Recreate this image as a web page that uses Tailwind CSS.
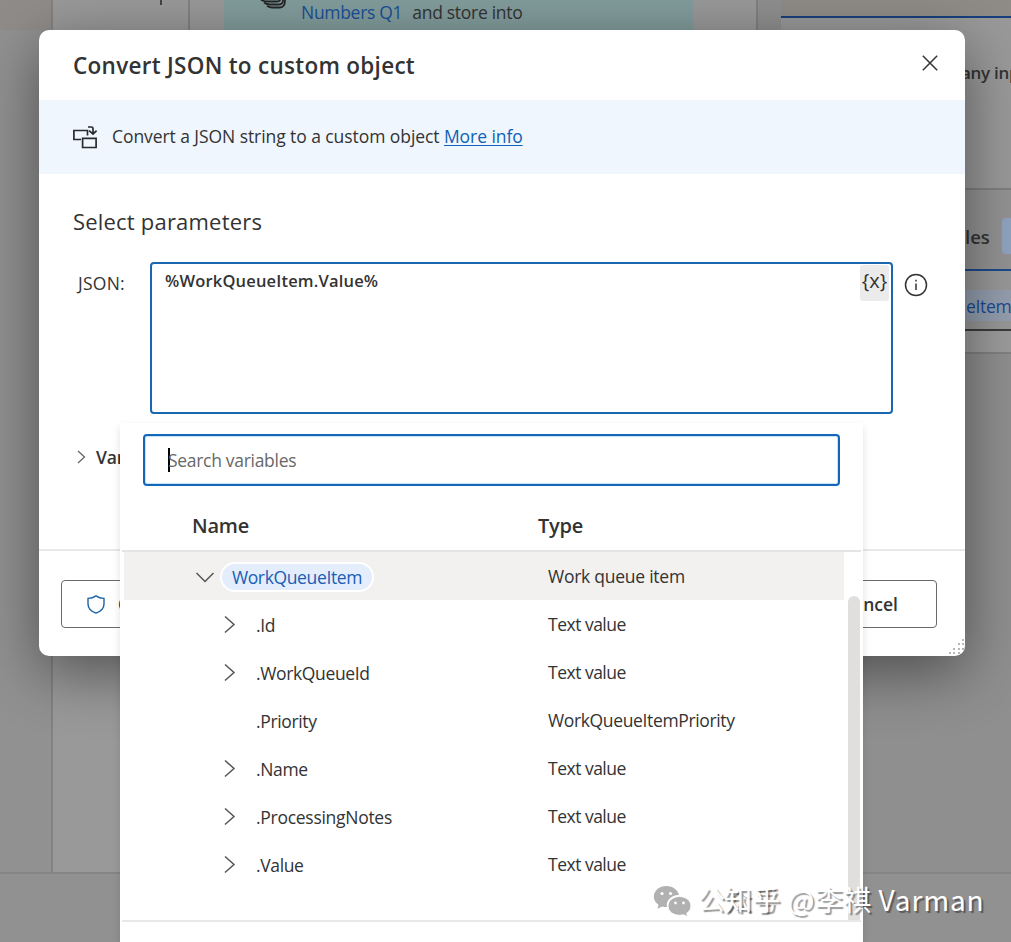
<!DOCTYPE html>
<html lang="en">
<head>
<meta charset="utf-8">
<title>Convert JSON to custom object</title>
<script src="https://cdn.jsdelivr.net/npm/@tailwindcss/browser@4"></script>
</head>
<body class="bg-[#909090]">
<div class="relative h-[942px] w-[1011px] overflow-hidden bg-[#919191] font-['Open_Sans','Noto_Sans_CJK_SC',sans-serif] text-[17.5px] leading-6 whitespace-nowrap text-[#333333]">

  <!-- Dimmed designer behind the dialog -->
  <div class="flex h-full flex-col">
    <div class="flex h-[872px] w-full shrink-0">
      <div class="w-[51px] shrink-0 bg-[#919191]"><div class="h-[30px] bg-[#8f8c89]"></div></div>
      <div class="flex w-[139px] shrink-0 justify-end border-x-2 border-x-[#828282] bg-[#999999] pr-[26px]"><div class="h-[5px] w-[2px] bg-[#444]"></div></div>
      <div class="w-[566px] shrink-0 bg-[#999999] pl-[34px]">
        <div class="flex h-[30px] w-[469px] items-start bg-[#829c9c] pl-[36px]">
          <svg class="h-[10px] w-[26px] shrink-0" viewBox="0 0 26 10" fill="none" stroke="#262626" stroke-width="1.800"><path d="M1 0C3 1 5 1.500 8 1.500h8c3 0 4-1 4-1.500M4 2.500c2 1.500 4 2 6 2h9c3 0 4-2 4-4.500M7 6c2 1 3 1.500 5 1.500h8c4 0 5-3 5-7.500" /></svg>
          <span class="ml-[15px] tracking-[-0.3px] text-[#1a4f97]">Numbers Q1</span><span class="ml-[10px] tracking-[-0.3px]">and store into</span>
        </div>
      </div>
      <div class="flex min-w-0 flex-1 flex-col border-l-2 border-[#808080] bg-[#8f8f8f]">
        <div class="ml-[23px] h-[18px] shrink-0 border-b-2 border-[#173f7c] bg-[#8f8c88]"></div>
        <div class="ml-[23px] h-[172px] shrink-0 border-b-2 border-[#7f7f7f] bg-[#999999] pt-[43px]">
          <div class="ml-[180px] text-[17px] font-semibold tracking-[-0.3px]">any input</div>
        </div>
        <div class="ml-[23px] flex h-[81px] shrink-0 border-b-2 border-[#1c4a8b] bg-[#939393]">
          <div class="mt-[35px] ml-[184px] w-[37px] shrink-0 text-[18.5px] font-semibold">les</div>
          <div class="mt-[28px] h-[36px] w-10 shrink-0 rounded-l bg-[#8fa3c0]"></div>
        </div>
        <div class="ml-[23px] h-[60px] shrink-0 border-b-2 border-[#3b3b3b] bg-[#989898] pt-[19px]"><div class="h-[31px] bg-[#949eae] pt-[4px] pl-[185px] tracking-[-0.3px] text-[#1a4b94]">eItem</div></div>
        <div class="ml-[23px] h-[23px] shrink-0 border-b-2 border-[#808080] bg-[#9c9c9c]"></div>
      </div>
    </div>
    <div class="flex-1 border-t-2 border-[#858585] bg-[#919191]"></div>
  </div>

  <!-- Dialog -->
  <div class="absolute top-[30px] left-[39px] flex h-[626px] w-[926px] flex-col rounded-[10px] bg-white shadow-[0_16px_60px_rgba(0,0,0,0.46)]">
    <div class="flex h-[70px] shrink-0 justify-between pt-[20px] pr-[27px] pl-[34px]">
      <h1 class="text-[22.500px] leading-8 font-semibold tracking-[0.28px]">Convert JSON to custom object</h1>
      <svg class="mt-[5px] size-4" viewBox="0 0 16 16" fill="none" stroke="#333" stroke-width="1.500"><path d="M.8.8l14.400 14.400M15.200.8L.8 15.200" /></svg>
    </div>
    <div class="flex h-[74px] shrink-0 items-start bg-[#f0f6fe] pt-[25px] pl-[34px]">
      <svg class="h-6 w-[25px] shrink-0" viewBox="0 0 25 24" fill="none" stroke="#262b30" stroke-width="1.700"><path d="M14.500 5.500H.9v9H8M9.600 13.300h13.500v9.200H9.600zM14.500 4.700v5.800M15 2h3.500q1.500 0 1.500 1.500v5M16.200 5.600l3.800 3.500 3.600-3.500" /></svg>
      <p class="-mt-px ml-[14px] tracking-[-0.07px]">Convert a JSON string to a custom object <span class="text-[#0f62b5] underline underline-offset-2">More info</span></p>
    </div>
    <div class="flex h-[375px] shrink-0 flex-col pl-[34px]">
      <h2 class="mt-[31px] text-[22px] leading-8 tracking-[0.2px]">Select parameters</h2>
      <div class="mt-[25px] flex items-start">
        <span class="mt-[9px] ml-[5px] w-[72px] shrink-0 tracking-[0.25px]">JSON:</span>
        <div class="flex h-[152px] w-[743px] shrink-0 justify-between rounded-[4px] border-2 border-[#1a66b0] pt-px pr-[2px] pl-[13px]">
          <span class="mt-[4px] text-[16.500px] font-semibold tracking-[0.18px]">%WorkQueueItem.Value%</span>
          <div class="flex h-9 w-[29px] justify-center rounded-[3px] bg-[#ebebeb] pt-[4px] text-[20px]">{x}</div>
        </div>
        <svg class="mt-[11px] ml-[11px] size-6" viewBox="0 0 24 24" fill="none" stroke="#333" stroke-width="1.500"><circle cx="12" cy="12" r="10.500" /><path d="M12 10.500v6.500M12 6.800v1.700" /></svg>
      </div>
      <div class="mt-[31px] flex items-center pl-[4px]">
        <svg class="h-[14px] w-[9px]" viewBox="0 0 9 14" fill="none" stroke="#666" stroke-width="1.300"><path d="M1 1l6.500 6L1 13" /></svg>
        <span class="ml-[10px] font-semibold tracking-[-0.1px]">Variables produced</span>
      </div>
    </div>
    <div class="relative flex flex-1 justify-between border-t-2 border-[#e8e8e8] pt-[29px] pr-[28px] pl-[22px]">
      <button class="flex h-12 w-[170px] items-center rounded-[4px] border border-[#6a6a6a] pl-[25px]">
        <svg class="h-[19px] w-[18px]" viewBox="0 0 18 19" fill="none" stroke="#1c62a6" stroke-width="1.400"><path d="M9 .9C11.500 2.700 14 3.300 17 3.400V9c0 4.500-3.500 7.500-8 9.200C4.500 16.500 1 13.500 1 9V3.400C4 3.300 6.500 2.700 9 .9z" /></svg>
        <span class="ml-[13px] font-semibold">On error</span>
      </button>
      <button class="flex h-12 w-[132px] items-center justify-end rounded-[4px] border border-[#6a6a6a] pr-[38px] font-semibold">Cancel</button>
      <svg class="absolute right-0 bottom-0 size-[18px]" viewBox="0 0 18 18" fill="#b8b8b8"><path d="M15 1h2v2h-2zM11 5h2v2h-2zM15 5h2v2h-2zM6 10h2v2H6zM11 10h2v2h-2zM15 10h2v2h-2zM2 14h2v2H2zM6 14h2v2H6zM11 14h2v2h-2z" /></svg>
    </div>
  </div>

  <!-- Variable picker -->
  <div class="absolute top-[423px] left-[120px] flex h-[519px] w-[743px] flex-col bg-white pt-[11px] shadow-[0_4px_8px_rgba(0,0,0,0.12)]">
    <div class="ml-[23px] flex h-[52px] w-[697px] shrink-0 items-center rounded-[4px] border-2 border-[#1565b8] pl-[23px] inset-shadow-[0_0_0_1px_#c3e3fa]">
      <div class="h-6 w-[2px] bg-black"></div><span class="-ml-[2px] tracking-[-0.3px] text-[#686868]">Search variables</span>
    </div>
    <div class="mx-[2px] flex h-[66px] shrink-0 items-center border-b-2 border-[#e4e4e4] pt-[15px] pl-[70px] text-[20px] font-semibold tracking-[-0.2px]"><span class="w-[346px]">Name</span><span>Type</span></div>
    <div class="flex h-[368px] shrink-0 pl-1">
      <div class="w-[720px] shrink-0 tracking-[-0.36px]">
        <div class="flex h-12 items-center bg-[#f2f1f0] pl-[71px]">
          <svg class="mt-[2px] h-[11px] w-[20px]" viewBox="0 0 20 11" fill="none" stroke="#555" stroke-width="1.500"><path d="M1.500 1L10 9.500 18.500 1" /></svg>
          <div class="mt-[2px] ml-[5px] flex h-[30px] w-[154px] items-center justify-center rounded-full border-2 border-white bg-[#e4edfb] text-[#1a5eb3]">WorkQueueItem</div>
          <span class="ml-[174px] tracking-[-0.25px]">Work queue item</span>
        </div>
        <div class="flex h-12 items-center pl-[100px]"><svg class="mt-px h-[19px] w-[12px]" viewBox="0 0 12 19" fill="none" stroke="#555" stroke-width="1.500"><path d="M1 1.500l9 8-9 8" /></svg><span class="mt-px ml-[20px] w-[292px]">.Id</span><span class="tracking-[-0.5px]">Text value</span></div>
        <div class="flex h-12 items-center pl-[100px]"><svg class="mt-px h-[19px] w-[12px]" viewBox="0 0 12 19" fill="none" stroke="#555" stroke-width="1.500"><path d="M1 1.500l9 8-9 8" /></svg><span class="mt-px ml-[20px] w-[292px]">.WorkQueueId</span><span class="tracking-[-0.5px]">Text value</span></div>
        <div class="flex h-12 items-center pl-[132px]"><span class="mt-px w-[292px]">.Priority</span><span>WorkQueueItemPriority</span></div>
        <div class="flex h-12 items-center pl-[100px]"><svg class="mt-px h-[19px] w-[12px]" viewBox="0 0 12 19" fill="none" stroke="#555" stroke-width="1.500"><path d="M1 1.500l9 8-9 8" /></svg><span class="mt-px ml-[20px] w-[292px]">.Name</span><span class="tracking-[-0.5px]">Text value</span></div>
        <div class="flex h-12 items-center pl-[100px]"><svg class="mt-px h-[19px] w-[12px]" viewBox="0 0 12 19" fill="none" stroke="#555" stroke-width="1.500"><path d="M1 1.500l9 8-9 8" /></svg><span class="mt-px ml-[20px] w-[292px] tracking-[-0.28px]">.ProcessingNotes</span><span class="tracking-[-0.5px]">Text value</span></div>
        <div class="flex h-12 items-center pl-[100px]"><svg class="mt-px h-[19px] w-[12px]" viewBox="0 0 12 19" fill="none" stroke="#555" stroke-width="1.500"><path d="M1 1.500l9 8-9 8" /></svg><span class="mt-px ml-[20px] w-[292px]">.Value</span><span class="tracking-[-0.5px]">Text value</span></div>
      </div>
      <div class="mt-[44px] ml-1 w-3 rounded-t-full bg-[#e0dfde]"></div>
    </div>
    <div class="mx-[2px] h-0 border-t-2 border-[#e8e8e8]"></div>
  </div>

  <!-- Watermark -->
  <div class="absolute top-[878px] left-[652px] h-[44px] w-[350px] font-['Noto_Sans_CJK_SC',sans-serif] text-[27px] leading-[42px] text-white [text-shadow:2px_2px_1px_rgba(0,0,0,0.4)]">
    <svg class="absolute top-[7px] left-px h-[32px] w-[39px]" viewBox="0 0 39 32"><path fill="#b1b1b1" d="M13.500 1C6.400 1 .8 5.800.8 11.600c0 3.400 1.800 6.200 4.700 8.200l-1 4 4.700-2.300c1.700.4 3.300.6 4.800.5-1.500-6.500 4.500-12.300 12-12C25 5 19.800 1 13.500 1z" /><path fill="#b1b1b1" stroke="#fff" d="M26.500 11.500C20 11.500 15 15.700 15 21s5 9.300 11.500 9.300c1.400 0 2.700-.2 3.900-.5l4.300 2-1-3.500c2.600-1.700 4.300-4.300 4.300-7.300 0-5.300-5-9.500-11.500-9.500z" /><g fill="#fff"><circle cx="9" cy="8.500" r="1.600" /><circle cx="17.500" cy="8.500" r="1.600" /><circle cx="22.500" cy="18" r="1.400" /><circle cx="30.500" cy="18" r="1.400" /></g></svg>
    <span class="absolute top-0 left-[46px]">公众号</span>
    <span class="absolute top-0 left-[72px] text-[28px] tracking-[0.5px]">知乎 @李祺 <span class="tracking-[0.85px]">Varman</span></span>
  </div>
</div>
</body>
</html>
